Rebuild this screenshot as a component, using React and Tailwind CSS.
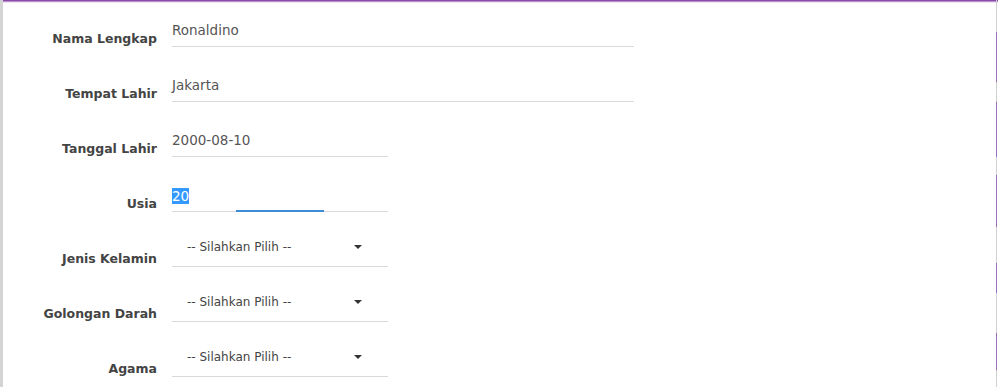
import React from "react";

const font = { fontFamily: '"DejaVu Sans", "Liberation Sans", sans-serif' };

function Label({ children }) {
  return (
    <div className="w-[157px] shrink-0 text-right text-[12.5px] font-bold leading-[16px] text-[#444]">
      {children}
    </div>
  );
}

function TextField({ value, wide }) {
  return (
    <div
      className={`ml-[15px] ${wide ? "w-[462px]" : "w-[216px]"} h-[32px] border-b border-[#d9d9d9] flex items-center text-[13.5px] text-[#555]`}
    >
      {value}
    </div>
  );
}

function SelectField() {
  return (
    <div className="ml-[15px] w-[216px] h-[40px] border-b border-[#d9d9d9] flex items-center justify-between pl-[15px] pr-[26px] text-[12px] text-[#444]">
      <span>-- Silahkan Pilih --</span>
      <span className="w-0 h-0 border-l-[4px] border-r-[4px] border-t-[4px] border-l-transparent border-r-transparent border-t-[#333]" />
    </div>
  );
}

function Row({ label, children }) {
  return (
    <div className="flex items-end h-[44px]">
      <Label>{label}</Label>
      {children}
    </div>
  );
}

const segments = [
  [32, 50],
  [102, 55],
  [175, 52],
  [263, 30],
  [333, 37],
];

export default function App() {
  return (
    <div className="relative w-[998px] h-[387px] bg-white overflow-hidden" style={font}>
      <div className="h-[1px] bg-[#8a4aa8]" />
      <div className="h-[1px] bg-[#b98fd0]" />
      <div className="h-[1px] bg-[#efe6f4]" />
      <div className="absolute left-0 top-0 bottom-0 w-[3px] bg-[#d4d4d4]" />
      <div className="absolute right-[1px] top-0 bottom-0 w-[1px] bg-[#d0d0d0]" />
      {segments.map(([t, h], i) => (
        <div
          key={i}
          className="absolute right-[1px] w-[1px] bg-[#9a6fc0]"
          style={{ top: t, height: h }}
        />
      ))}
      <div className="flex flex-col gap-[11px]">
        <Row label="Nama Lengkap">
          <TextField value="Ronaldino" wide />
        </Row>
        <Row label="Tempat Lahir">
          <TextField value="Jakarta" wide />
        </Row>
        <Row label="Tanggal Lahir">
          <TextField value="2000-08-10" />
        </Row>
        <Row label="Usia">
          <div className="relative ml-[15px] w-[216px] h-[32px] border-b border-[#d9d9d9] flex items-center text-[13.5px]">
            <span className="bg-[#3399ff] text-white leading-[16px]">20</span>
            <div className="absolute left-[64px] w-[88px] bottom-[-1px] h-[2px] bg-[#3d8bd4]" />
          </div>
        </Row>
        <Row label="Jenis Kelamin">
          <SelectField />
        </Row>
        <Row label="Golongan Darah">
          <SelectField />
        </Row>
        <Row label="Agama">
          <SelectField />
        </Row>
      </div>
    </div>
  );
}
